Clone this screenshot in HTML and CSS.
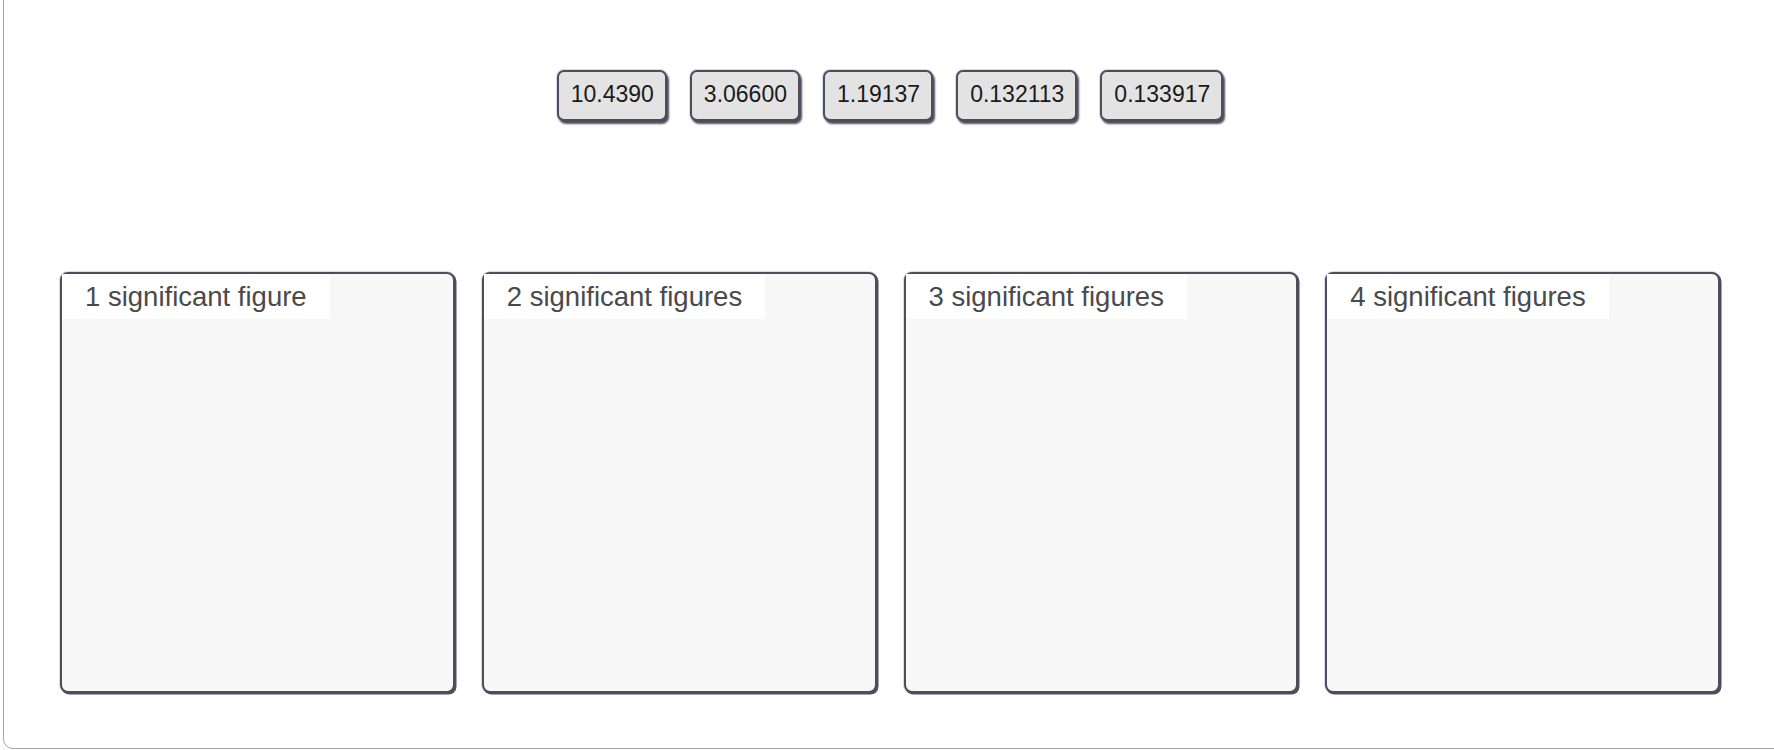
FILE: index.html
```html
<!DOCTYPE html>
<html lang="en">

<head>
    <meta charset="UTF-8">
    <meta name="viewport" content="width=device-width, initial-scale=1.0">
    <title>Significant figures</title>
    <link rel="stylesheet" href="styles.css">
</head>

<body>
    <div class="frame">
        <div class="inner">
            <div class="chips">
                <div class="chip">10.4390</div>
                <div class="chip">3.06600</div>
                <div class="chip">1.19137</div>
                <div class="chip">0.132113</div>
                <div class="chip">0.133917</div>
            </div>
            <div class="bins">
                <div class="bin"><span class="cap">1 significant figure</span></div>
                <div class="bin"><span class="cap">2 significant figures</span></div>
                <div class="bin"><span class="cap">3 significant figures</span></div>
                <div class="bin"><span class="cap">4 significant figures</span></div>
            </div>
        </div>
    </div>
</body>

</html>
```

FILE: styles.css
```css
html,
body {
    margin: 0;
    overflow: hidden;
    background: #fff;
    font-family: "Liberation Sans", Arial, Helvetica, sans-serif;
}

.frame {
    box-sizing: border-box;
    width: 1800px;
    height: 769px;
    margin: -20px 0 0 3px;
    padding-top: 89px;
    border: 1px solid #a4a4a4;
    border-radius: 10px;
}

.inner {
    width: 1660px;
    margin-left: 56px;
}

.chips {
    display: flex;
    justify-content: center;
    gap: 23px;
}

.chip {
    box-sizing: border-box;
    height: 51px;
    padding: 0 11px 0 12px;
    border: 2px solid #4e4d5b;
    border-radius: 7px;
    background-color: #e3e3e3;
    box-shadow: 2px 3px 2px rgba(50, 50, 62, 0.85), 0 0 0 1px #d9d9f2;
    color: #1a1a1a;
    font-size: 23px;
    line-height: 45px;
}

.bins {
    display: flex;
    gap: 27px;
    margin-top: 151px;
}

.bin {
    box-sizing: border-box;
    width: 395px;
    height: 421px;
    border: 2px solid #4e4d5b;
    border-radius: 8px;
    background-color: #f7f7f7;
    box-shadow: 1.5px 1.5px 0 #4e4d5b, 0 0 0 1px #d9d9f2;
}

.cap {
    display: inline-block;
    height: 45px;
    padding: 2px 23px 0 23px;
    box-sizing: border-box;
    background-color: #fff;
    color: #4a4a4a;
    font-size: 27.5px;
    line-height: 42px;
}
```
